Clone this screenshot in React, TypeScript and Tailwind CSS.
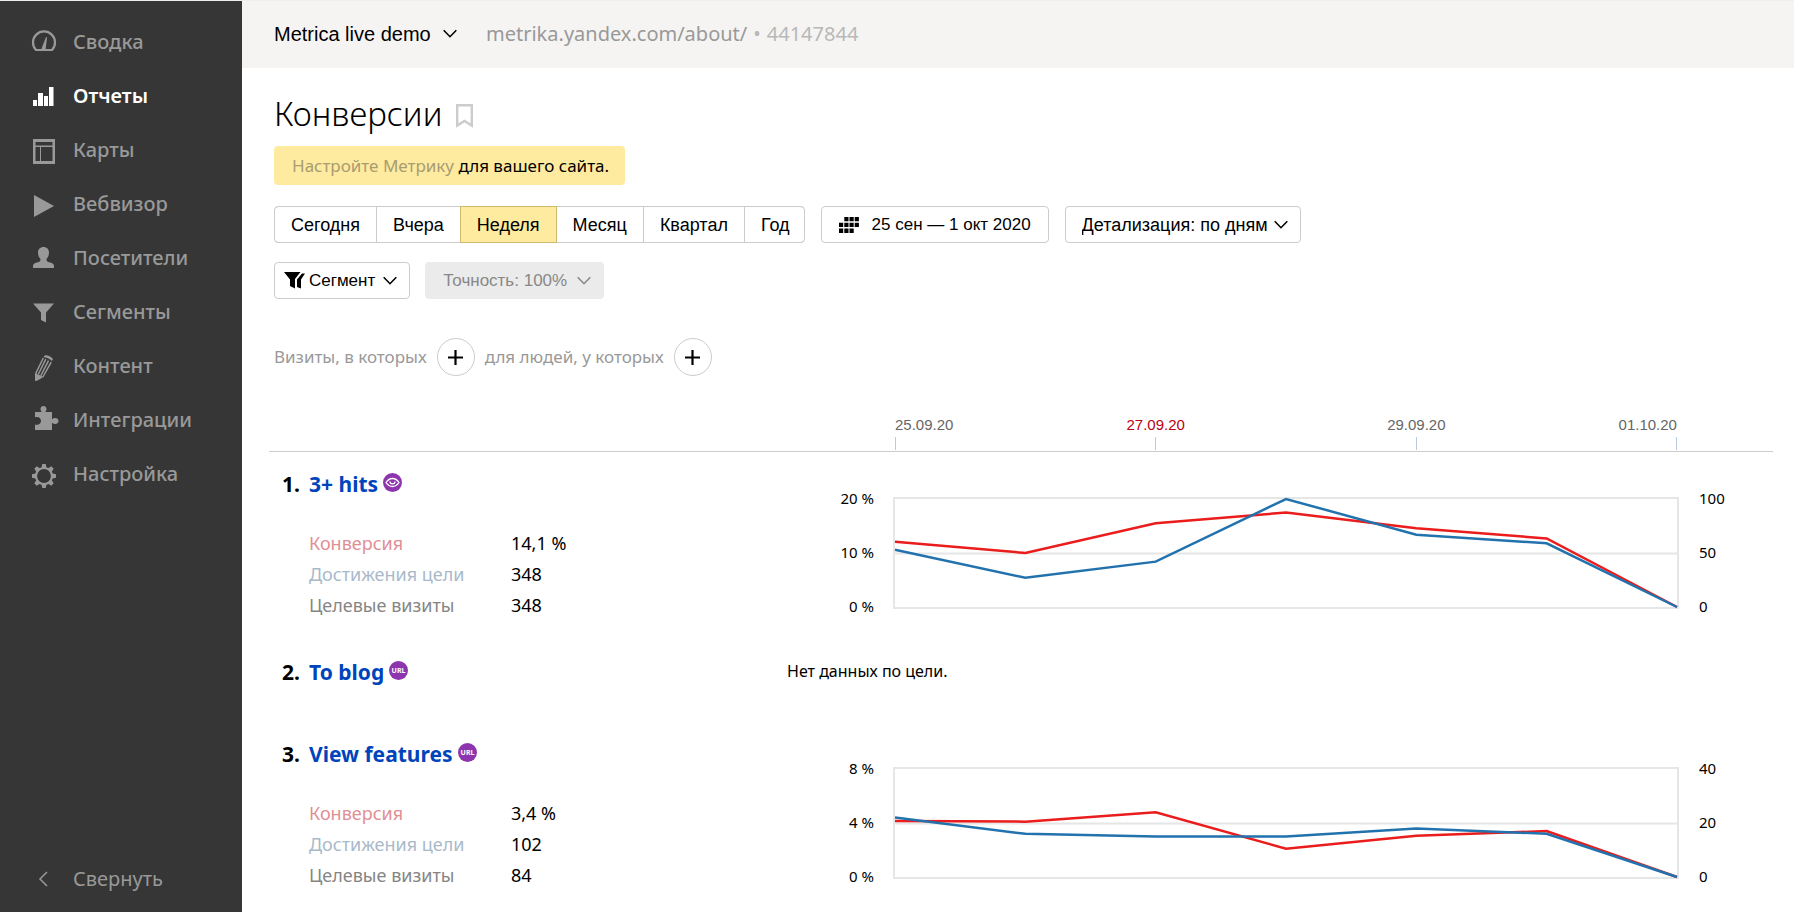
import React, { useState } from "react";

type Scale = [string, string, string];

interface Goal {
  title: string;
  kind: "eye" | "url";
  metrics?: [string, string, string];
  left?: Scale;
  right?: Scale;
  maxConversion?: number;
  maxReaches?: number;
  conversion?: number[];
  reaches?: number[];
}

const GOALS: Goal[] = [
  {
    title: "3+ hits",
    kind: "eye",
    metrics: ["14,1 %", "348", "348"],
    left: ["20 %", "10 %", "0 %"],
    right: ["100", "50", "0"],
    maxConversion: 20,
    maxReaches: 100,
    conversion: [12.1, 10, 15.5, 17.5, 14.6, 12.7, 0],
    reaches: [53, 27, 42, 100, 67, 59, 0],
  },
  { title: "To blog", kind: "url" },
  {
    title: "View features",
    kind: "url",
    metrics: ["3,4 %", "102", "84"],
    left: ["8 %", "4 %", "0 %"],
    right: ["40", "20", "0"],
    maxConversion: 8,
    maxReaches: 40,
    conversion: [4.15, 4.1, 4.8, 2.1, 3.05, 3.4, 0],
    reaches: [22, 16, 15, 15, 18, 16, 0],
  },
];

const METRIC_LABELS = [
  { label: "Конверсия", color: "text-[#e08f94]" },
  { label: "Достижения цели", color: "text-[#a9b9c9]" },
  { label: "Целевые визиты", color: "text-[#858585]" },
];

const DATES = [
  { label: "25.09.20", holiday: false },
  { label: "27.09.20", holiday: true },
  { label: "29.09.20", holiday: false },
  { label: "01.10.20", holiday: false },
];

const PERIODS = ["Сегодня", "Вчера", "Неделя", "Месяц", "Квартал", "Год"];

const NAV: { label: string; icon: React.ReactNode }[] = [
  {
    label: "Сводка",
    icon: (
      <>
        <path
          d="M4 19A11 11 0 1 1 20 19Z"
          fill="none"
          stroke="currentColor"
          strokeWidth="2.200"
          strokeLinejoin="round"
        />
        <path d="M14 6 9 19h4.600L15 6.200Z" />
      </>
    ),
  },
  {
    label: "Отчеты",
    icon: <path d="M1 15h4v6H1zM6 8h5v13H6zM12 11h4v10h-4zM17 2h4.500v19H17z" />,
  },
  {
    label: "Карты",
    icon: (
      <path
        fillRule="evenodd"
        d="M1 0h22v25H1zM3.500 3v3.500h17V3zM3.500 8v14H8V8zM9 8v14h11.500V8z"
      />
    ),
  },
  { label: "Вебвизор", icon: <path d="M2 2v22l20-11z" /> },
  {
    label: "Посетители",
    icon: (
      <path d="M11.500 0C8 0 6 2.300 6 5.600c0 3 1.200 5 2.500 6.400 0 2-.5 2.700-2.500 3.300-3 .8-5 1.600-5 3.700v2h21v-2c0-2.100-2-2.900-5-3.700-2-.6-2.500-1.300-2.500-3.300C15.800 10.600 17 8.600 17 5.600 17 2.300 15 0 11.500 0z" />
    ),
  },
  { label: "Сегменты", icon: <path d="M1 2.500h21L14 11.500v10L9 19v-7.500z" /> },
  {
    label: "Контент",
    icon: (
      <>
        <path d="M12.500.5c2.500-.8 6.500 1 8.500 3.500l-1 2C17.500 3.800 14.500 2.400 11.500 2.300z" />
        <path
          d="M11.300 3 3.700 18.500M13.800 4.200 6.200 19.500M16.500 5.600 8.700 21M19.200 7.200 10.900 22"
          fill="none"
          stroke="currentColor"
          strokeWidth="1.500"
        />
        <path d="M3 18.500c1.500-.5 2.500.3 2.700 1.300 1.500-.2 2.300.3 2.500 1.300 1.300-.2 2.300.3 3.300 1L5.500 25.500 3 26z" />
      </>
    ),
  },
  {
    label: "Интеграции",
    icon: (
      <path
        transform="translate(0 -4)"
        d="M3 7h6.800c-.9-1-1.300-1.800-1.300-2.900C8.500 2.300 9.800 1 11.500 1s3 1.300 3 3.100c0 1.100-.4 1.900-1.300 2.900H20v7.300c1-.9 2-1.300 3.100-1.300 2 0 3.400 1.200 3.400 3s-1.400 3-3.400 3c-1.100 0-2.100-.4-3.100-1.300V25H3v-5.500c2.800 1.200 6-.6 6-3.500s-3.200-4.700-6-3.500z"
      />
    ),
  },
  {
    label: "Настройка",
    icon: (
      <>
        <circle
          cx="12"
          cy="13"
          r="8"
          fill="none"
          stroke="currentColor"
          strokeWidth="2.200"
        />
        {[0, 45, 90, 135, 180, 225, 270, 315].map((a) => (
          <path
            key={a}
            d="M9.300 5.500 10.300 1h3.400l1 4.500z"
            transform={`rotate(${a} 12 13)`}
          />
        ))}
      </>
    ),
  },
];

function Chevron({ className = "" }: { className?: string }) {
  return (
    <svg
      viewBox="0 0 14 9"
      className={`h-[9px] w-3.5 ${className}`}
      fill="none"
      stroke="currentColor"
      strokeWidth="1.600"
      aria-hidden
    >
      <path d="M.7 1.300 7 7.700l6.300-6.400" />
    </svg>
  );
}

function Sidebar() {
  return (
    <aside className="flex w-[242px] shrink-0 flex-col bg-[#363636] pt-3.5 pb-1.5">
      <nav className="flex flex-col">
        {NAV.map((item) => (
          <a
            key={item.label}
            href="#"
            aria-current={item.label === "Отчеты" ? "page" : undefined}
            className={`flex h-[54px] items-center gap-[13px] pl-8 text-xl ${
              item.label === "Отчеты"
                ? "font-semibold text-white"
                : "font-medium text-[#999]"
            }`}
          >
            <svg
              viewBox="0 -2 28 26"
              className="h-[26px] w-7 shrink-0 overflow-visible"
              fill="currentColor"
              aria-hidden
            >
              {item.icon}
            </svg>
            {item.label}
          </a>
        ))}
      </nav>
      <button
        type="button"
        className="mt-auto flex h-[54px] items-center gap-[13px] pl-8 text-xl text-[#999]"
      >
        <svg
          viewBox="0 0 28 26"
          className="h-[26px] w-7"
          fill="none"
          stroke="currentColor"
          strokeWidth="1.500"
          aria-hidden
        >
          <path d="m15 6-7 7 7 7" />
        </svg>
        Свернуть
      </button>
    </aside>
  );
}

function TopBar() {
  return (
    <header className="flex h-[67px] items-center bg-[#f5f4f2] pb-0.5 pl-8 text-xl">
      <div className="relative mr-[29px] flex items-center font-['Liberation_Sans',Arial,sans-serif]">
        <select
          aria-label="Счетчик"
          className="appearance-none bg-transparent pr-[26px] text-black"
        >
          <option>Metrica live demo</option>
        </select>
        <Chevron className="pointer-events-none absolute right-0" />
      </div>
      <a href="#" className="text-[#999]">
        metrika.yandex.com/about/
      </a>
      <span className="mx-1.5 text-[#b8b8b8]">•</span>
      <span className="text-[#b8b8b8]">44147844</span>
    </header>
  );
}

function Toolbar() {
  const [period, setPeriod] = useState("Неделя");
  return (
    <div className="flex flex-col gap-[19px] font-['Liberation_Sans',Arial,sans-serif] text-[17px] text-black">
      <div className="flex flex-wrap gap-4">
        <div className="flex h-[37px] rounded border border-[#ccc] text-lg">
          {PERIODS.map((p) => (
            <button
              key={p}
              type="button"
              aria-pressed={p === period}
              onClick={() => setPeriod(p)}
              className={`-my-px border-y px-4 first:rounded-l last:rounded-r last:pr-3.5 ${
                p === period
                  ? "border-x border-[#ccb96e] bg-[#ffeba0]"
                  : "border-r border-[#ccc] last:border-r-0 has-[+[aria-pressed=true]]:border-r-0"
              }`}
            >
              {p}
            </button>
          ))}
        </div>
        <button
          type="button"
          className="flex h-[37px] items-center gap-[13px] rounded border border-[#ccc] px-[17px]"
        >
          <svg viewBox="0 0 20 16" className="h-4 w-5" aria-hidden>
            <path d="M5.300 0h4.200v4.300H5.300zM10.500 0h4.200v4.300h-4.200zM15.700 0h4.200v4.300h-4.200zM0 5.800h4.200v4.300H0zM5.300 5.800h4.200v4.300H5.300zM10.500 5.800h4.200v4.300h-4.200zM15.700 5.800h4.200v4.300h-4.200zM0 11.600h4.200v4.300H0zM5.300 11.600h4.200v4.300H5.300zM10.500 11.600h4.200v4.300h-4.200z" />
          </svg>
          25 сен — 1 окт 2020
        </button>
        <div className="relative flex items-center text-lg">
          <select
            aria-label="Детализация"
            className="h-[37px] appearance-none rounded border border-[#ccc] pr-8 pl-4"
          >
            <option>Детализация: по дням</option>
          </select>
          <Chevron className="pointer-events-none absolute right-[13px]" />
        </div>
      </div>
      <div className="flex gap-[15px]">
        <button
          type="button"
          aria-haspopup="menu"
          className="flex h-[37px] items-center gap-1 rounded border border-[#ccc] pr-3 pl-[9px]"
        >
          <svg viewBox="0 0 21 17" className="h-[17px] w-[21px]" aria-hidden>
            <path d="M0 0h16.500L11 7v9.500L6 14V7.500z" />
            <path d="M18 1.500h3L17 7.500v9l-4-1.500V7.500z" />
          </svg>
          Сегмент
          <Chevron className="ml-1" />
        </button>
        <div className="relative flex items-center text-[#888]">
          <select
            aria-label="Точность"
            disabled
            className="h-[37px] appearance-none rounded bg-[#ebebeb] pr-[37px] pl-[18px] opacity-100"
          >
            <option>Точность: 100%</option>
          </select>
          <Chevron className="pointer-events-none absolute right-[13px]" />
        </div>
      </div>
    </div>
  );
}

function AddButton({ label }: { label: string }) {
  return (
    <button
      type="button"
      aria-label={label}
      className="flex size-[38px] items-center justify-center rounded-full border border-[#ccc]"
    >
      <svg
        viewBox="0 0 15 15"
        className="size-[15px]"
        stroke="#000"
        strokeWidth="2.200"
        aria-hidden
      >
        <path d="M7.500 0v15M0 7.500h15" />
      </svg>
    </button>
  );
}

function GoalBadge({ kind }: { kind: Goal["kind"] }) {
  return (
    <svg viewBox="0 0 19 19" className="mb-1.5 size-[19px]" aria-hidden>
      <circle cx="9.500" cy="9.500" r="9.500" fill="#8d35ad" />
      {kind === "eye" ? (
        <>
          <path
            d="M3 9.500C5 6.500 7 5.500 9.500 5.500S14 6.500 16 9.500C14 12.500 12 13.500 9.500 13.500S5 12.500 3 9.500z"
            fill="none"
            stroke="#fff"
            strokeWidth="1.300"
          />
          <path
            d="M7 8.500a2.500 2.300 0 0 0 5 0"
            fill="none"
            stroke="#fff"
            strokeWidth="1.300"
          />
        </>
      ) : (
        <text
          x="9.500"
          y="12"
          fill="#fff"
          fontSize="7"
          fontWeight="700"
          textAnchor="middle"
        >
          URL
        </text>
      )}
    </svg>
  );
}

function points(values: number[], max: number) {
  return values
    .map((v, i) => `${(i * 782) / 6 + 1},${1 + 108 * (1 - v / max)}`)
    .join(" ");
}

function ScaleColumn({ values, className }: { values: Scale; className: string }) {
  return (
    <div
      className={`-my-2.5 flex h-[128px] flex-col justify-between text-[15px] leading-5 text-black ${className}`}
    >
      {values.map((v) => (
        <span key={v}>{v}</span>
      ))}
    </div>
  );
}

function GoalChart({ goal }: { goal: Goal }) {
  return (
    <svg
      viewBox="0 0 784 110"
      preserveAspectRatio="none"
      className="h-[110px] min-w-0 flex-1 overflow-visible"
      fill="none"
      strokeWidth="2"
      role="img"
      aria-label={goal.title}
    >
      <path
        d="M0 0H784V110H0ZM0 55.500H784"
        stroke="#e6e6e6"
        vectorEffect="non-scaling-stroke"
      />
      <polyline
        points={points(goal.conversion!, goal.maxConversion!)}
        stroke="#ea1c1c"
        strokeWidth="2.500"
        vectorEffect="non-scaling-stroke"
      />
      <polyline
        points={points(goal.reaches!, goal.maxReaches!)}
        stroke="#2272ae"
        strokeWidth="2.500"
        vectorEffect="non-scaling-stroke"
      />
    </svg>
  );
}

function GoalRow({ goal, index }: { goal: Goal; index: number }) {
  return (
    <section
      className={`flex items-start last:h-auto ${
        goal.metrics ? "h-[188px]" : "h-[82px]"
      }`}
    >
      <div className={goal.metrics ? "w-[569px] shrink-0" : "w-[518px] shrink-0"}>
        <h2 className="flex h-8 items-center pl-[13px] text-[21px] font-bold text-black">
          <span className="w-[27px]">{index + 1}.</span>
          <a href="#" className="mr-[5px] text-[#0044bb]">
            {goal.title}
          </a>
          <GoalBadge kind={goal.kind} />
        </h2>
        {goal.metrics && (
          <table className="mt-[27px] ml-10 text-lg leading-[31px]">
            <tbody>
              {METRIC_LABELS.map((m, i) => (
                <tr key={m.label}>
                  <th
                    scope="row"
                    className={`w-[202px] p-0 text-left font-normal ${m.color}`}
                  >
                    {m.label}
                  </th>
                  <td className="p-0 text-black">{goal.metrics![i]}</td>
                </tr>
              ))}
            </tbody>
          </table>
        )}
      </div>
      {goal.metrics ? (
        <div className="flex flex-1 pt-[29px]">
          <ScaleColumn values={goal.left!} className="w-9 text-right" />
          <div className="w-5" />
          <GoalChart goal={goal} />
          <ScaleColumn values={goal.right!} className="w-[95px] pl-[21px]" />
        </div>
      ) : (
        <p className="text-base leading-[28px] text-black">Нет данных по цели.</p>
      )}
    </section>
  );
}

function DateAxis() {
  return (
    <div className="flex justify-between border-b border-[#ccc] pr-24 pl-[626px] font-['Liberation_Sans',Arial,sans-serif] text-[15px] leading-5 text-[#666]">
      {DATES.map((d, i) => (
        // zero width keeps the ticks evenly spaced whatever the label size
        <div
          key={d.label}
          className={`flex w-0 flex-col gap-0.5 pb-px ${
            i === 0
              ? "items-start"
              : i === DATES.length - 1
                ? "items-end"
                : "items-center"
          }`}
        >
          <span className={d.holiday ? "text-[#bb0011]" : ""}>{d.label}</span>
          <span className="h-[13px] w-px bg-[#b9cbdc]" />
        </div>
      ))}
    </div>
  );
}

export default function App() {
  return (
    <div className="flex min-h-screen border-t border-[#eee] bg-white font-['Noto_Sans',sans-serif]">
      <Sidebar />
      <div className="flex min-w-0 flex-1 flex-col">
        <TopBar />
        <main>
          <div className="pt-[22px] pl-8">
            <div className="flex items-center gap-3.5">
              <h1 className="text-[33px] leading-[48px] font-light text-black">
                Конверсии
              </h1>
              <button
                type="button"
                aria-label="Добавить в избранное"
                className="pt-1"
              >
                <svg
                  viewBox="0 0 17 24"
                  className="h-6 w-[17px]"
                  fill="none"
                  stroke="#ccc"
                  strokeWidth="2.400"
                  aria-hidden
                >
                  <path d="M1.200 1.200h14.600V21.500L8.500 17 1.200 21.500z" />
                </svg>
              </button>
            </div>
            <p className="mt-2 mb-[21px] flex h-[39px] w-fit items-center rounded bg-[#ffeba0] pr-4 pl-[18px] text-[17px] whitespace-pre">
              <a href="#" className="text-[#a89c70]">
                Настройте Метрику
              </a>
              <span className="text-black"> для вашего сайта.</span>
            </p>
            <Toolbar />
            <div className="mt-[39px] flex items-center text-[17px] text-[#999]">
              <span className="mr-2.5">Визиты, в которых</span>
              <AddButton label="Добавить условие для визитов" />
              <span className="mx-2.5">для людей, у которых</span>
              <AddButton label="Добавить условие для людей" />
            </div>
          </div>
          <div className="mt-[39px] mr-[21px] ml-[27px]">
            <DateAxis />
            <div className="pt-[17px]">
              {GOALS.map((g, i) => (
                <GoalRow key={g.title} goal={g} index={i} />
              ))}
            </div>
          </div>
        </main>
      </div>
    </div>
  );
}
